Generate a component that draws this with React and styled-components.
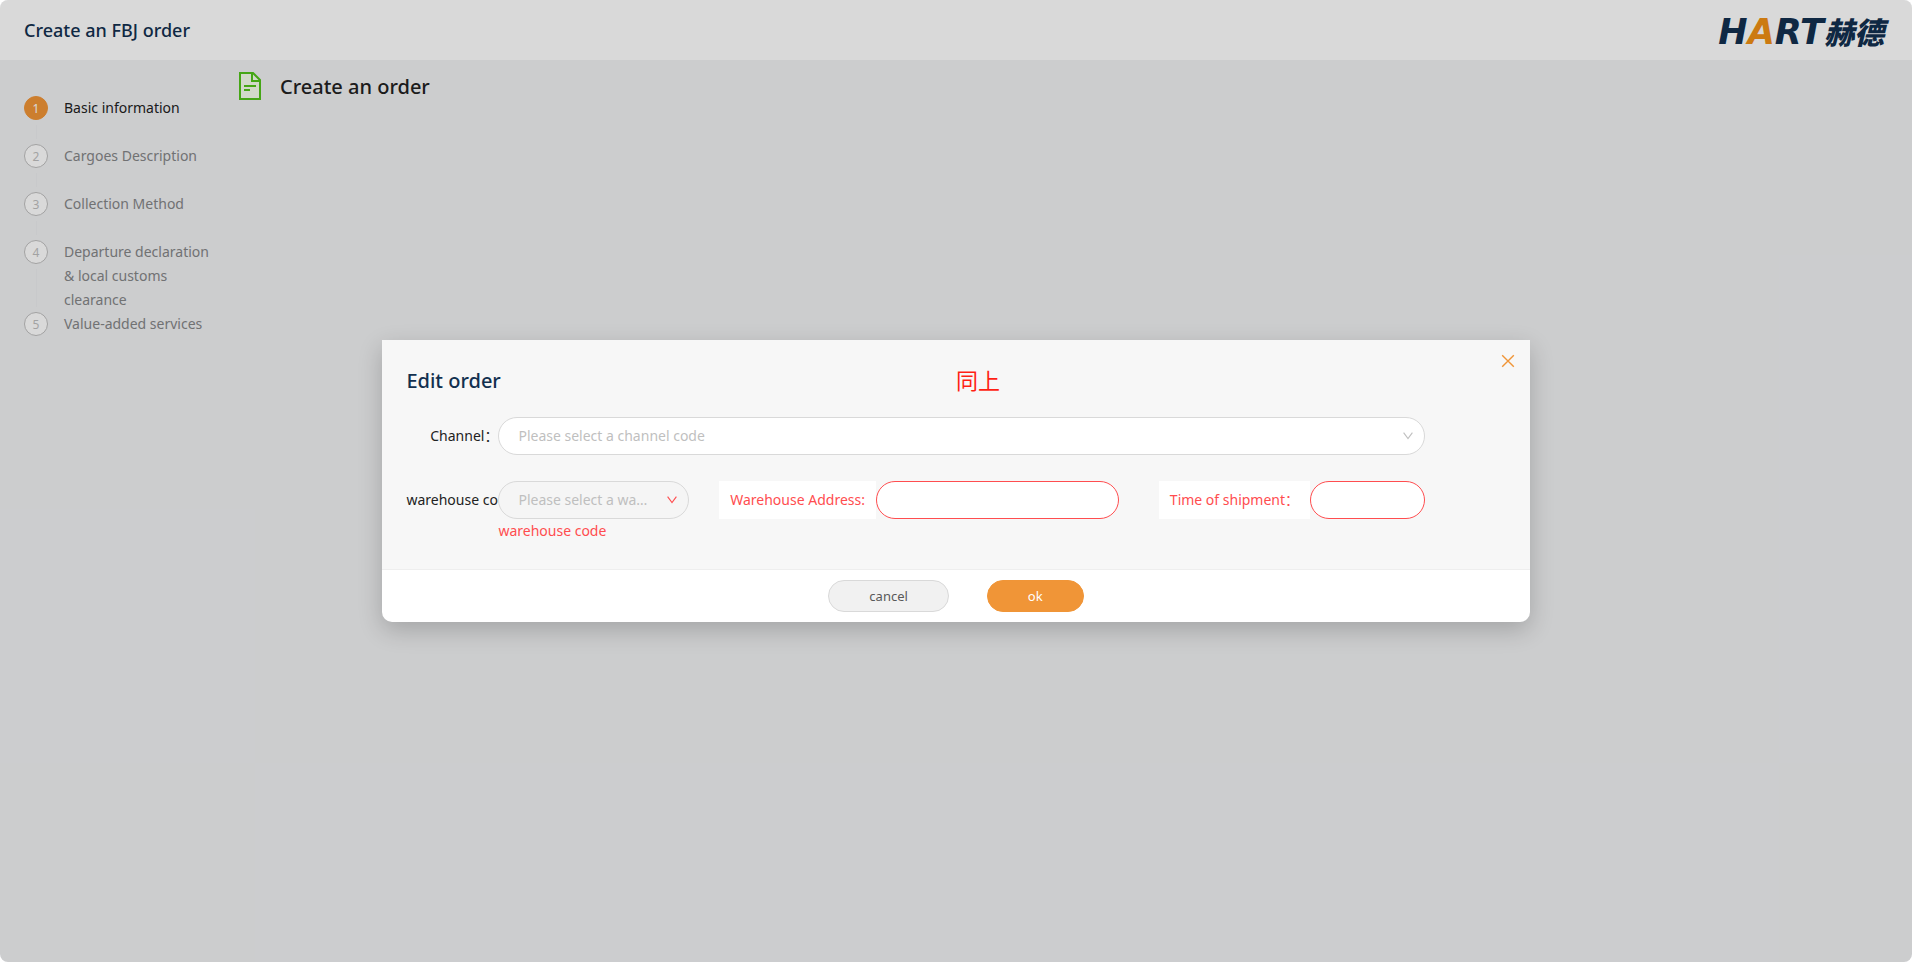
import styled, { createGlobalStyle } from 'styled-components'

const steps = [
  'Basic information',
  'Cargoes Description',
  'Collection Method',
  'Departure declaration & local customs clearance',
  'Value-added services',
]

function ArrowIcon() {
  return (
    <svg width="12" height="12" viewBox="0 0 12 12" fill="none" stroke="currentColor" strokeWidth="1.1">
      <path d="M1.6 2.6 6 8.6l4.4-6" />
    </svg>
  )
}

function CloseIcon() {
  return (
    <svg width="14" height="14" viewBox="0 0 14 14" fill="none" stroke="currentColor" strokeWidth="1.4">
      <path d="M1.2 1.2l11.6 11.6M12.8 1.2 1.2 12.8" />
    </svg>
  )
}

function FileIcon() {
  return (
    <svg width="22" height="28" viewBox="0 0 22 28" fill="none" stroke="#52c41a" strokeWidth="2">
      <path d="M1 1h13l7 7v19H1z" fill="#f6ffed" />
      <path d="M13 1v8h8" />
      <path d="M5 14h12M5 18h6" />
    </svg>
  )
}

function App() {
  return (
    <>
      <GlobalStyle />
      <Page>
        <Header>
          <PageTitle>Create an FBJ order</PageTitle>
          <Logo>
            <LogoLatin>H<i>A</i>RT</LogoLatin>
            <LogoHan>赫德</LogoHan>
          </Logo>
        </Header>
        <Content>
          <StepList>
            {steps.map((step, i) => (
              <Step key={step}>
                <StepMark>
                  <StepNumber $active={i === 0}>{i + 1}</StepNumber>
                </StepMark>
                <StepText $active={i === 0}>{step}</StepText>
              </Step>
            ))}
          </StepList>
          <Main>
            <FileIcon />
            <h2>Create an order</h2>
          </Main>
        </Content>

        <Mask>
          <Modal role="dialog" aria-labelledby="modal-title">
            <CloseBtn type="button" aria-label="close">
              <CloseIcon />
            </CloseBtn>
            <ModalBody>
              <ModalHead>
                <ModalTitle id="modal-title">Edit order</ModalTitle>
                <Remark>同上</Remark>
              </ModalHead>
              <Form>
                <ChannelRow>
                  <Label htmlFor="channel" $right>Channel：</Label>
                  <SelectBox>
                    <Select id="channel" defaultValue="">
                      <option value="">Please select a channel code</option>
                    </Select>
                    <ArrowIcon />
                  </SelectBox>
                </ChannelRow>
                <WarehouseRow>
                  <Label htmlFor="warehouse">warehouse code：</Label>
                  <div>
                    <SelectBox $error>
                      <Select id="warehouse" defaultValue="" disabled>
                        <option value="">Please select a warehouse code</option>
                      </Select>
                      <ArrowIcon />
                    </SelectBox>
                    <ErrorText>warehouse code</ErrorText>
                  </div>
                  <Field>
                    <FieldLabel htmlFor="address">Warehouse Address:</FieldLabel>
                    <Input id="address" type="text" />
                  </Field>
                  <Field>
                    <FieldLabel htmlFor="shipment">Time of shipment：</FieldLabel>
                    <Input id="shipment" type="text" />
                  </Field>
                </WarehouseRow>
              </Form>
            </ModalBody>
            <ModalFooter>
              <Button type="button">cancel</Button>
              <Button type="button" $primary>ok</Button>
            </ModalFooter>
          </Modal>
        </Mask>
      </Page>
    </>
  )
}

export default App

const GlobalStyle = createGlobalStyle`
  * {
    box-sizing: border-box;
  }

  body {
    margin: 0;
    background: #fff;
    color: #222;
    font-family: 'Noto Sans', 'Noto Sans CJK SC', sans-serif;
    font-size: 14px;
    line-height: 24px;
  }

  h1, h2, h3, p, ol {
    margin: 0;
    padding: 0;
  }

  button, input, select {
    font: inherit;
  }
`

const Page = styled.div`
  position: relative;
  min-height: 100vh;
  border-radius: 8px;
  overflow: hidden;
  background: #f0f1f3;
`

const Header = styled.header`
  display: flex;
  align-items: center;
  justify-content: space-between;
  height: 60px;
  padding: 0 24px;
  background: #fff;
`

const PageTitle = styled.h1`
  color: #12304f;
  font-size: 18px;
  font-weight: 500;
`

const Logo = styled.div`
  display: flex;
  align-items: baseline;
  padding: 2px 4px 0 0;
  color: #12304f;
  line-height: 32px;
`

const LogoLatin = styled.span`
  font-family: 'DejaVu Sans', sans-serif;
  font-size: 35px;
  font-weight: 700;
  font-style: italic;

  i {
    color: #f09015;
  }
`

const LogoHan = styled.span`
  font-family: 'Noto Sans CJK SC', sans-serif;
  font-size: 30px;
  font-weight: 900;
  font-style: italic;
`

const Content = styled.div`
  display: flex;
`

const StepList = styled.ol`
  flex: 0 0 239px;
  padding: 36px 24px;
  list-style: none;
`

const StepMark = styled.div`
  display: flex;
  flex-direction: column;
  align-items: center;
  gap: 5px;
  padding-bottom: 5px;

  &::after {
    content: '';
    flex: 1;
    width: 1px;
    background: #ecedef;
  }
`

const Step = styled.li`
  display: flex;
  gap: 16px;
  min-height: 48px;

  &:last-child ${StepMark}::after {
    display: none;
  }
`

const StepNumber = styled.span`
  width: 24px;
  height: 24px;
  border: 1px solid ${({ $active }) => ($active ? '#f09537' : '#bfbfbf')};
  border-radius: 50%;
  background: ${({ $active }) => ($active ? '#f09537' : '#fff')};
  color: ${({ $active }) => ($active ? '#fff' : '#bfbfbf')};
  font-size: 12px;
  text-align: center;
`

const StepText = styled.span`
  width: 150px;
  color: ${({ $active }) => ($active ? '#222' : '#858688')};
`

const Main = styled.main`
  display: flex;
  flex: 1;
  align-items: flex-start;
  gap: 19px;
  padding-top: 12px;

  h2 {
    color: #222;
    font-size: 20px;
    font-weight: 500;
    line-height: 30px;
  }
`

const Mask = styled.div`
  position: absolute;
  inset: 0;
  display: flex;
  align-items: center;
  justify-content: center;
  background: rgba(0, 0, 0, 0.15);
`

const Modal = styled.section`
  position: relative;
  width: 60%;
  border-radius: 0 0 10px 10px;
  background: #fff;
  box-shadow: 0 8px 24px rgba(0, 0, 0, 0.2);
`

const CloseBtn = styled.button`
  position: absolute;
  top: 10px;
  right: 11px;
  display: flex;
  align-items: center;
  justify-content: center;
  width: 22px;
  height: 22px;
  padding: 0;
  border: 0;
  background: none;
  color: #f09537;
`

const ModalBody = styled.div`
  padding: 25px 0 26px;
  background: #f7f7f7;
`

const ModalHead = styled.div`
  display: grid;
  grid-template-columns: 1fr 1fr;
  line-height: 32px;
`

const ModalTitle = styled.h3`
  padding-left: 24px;
  color: #12304f;
  font-size: 20px;
  font-weight: 500;
`

const Remark = styled.span`
  color: #ff1f14;
  font-size: 22px;
  line-height: 30px;
`

const Form = styled.form`
  display: grid;
  gap: 26px;
  padding: 20px 105px 0 24px;
`

const ChannelRow = styled.div`
  display: grid;
  grid-template-columns: 92px 1fr;
`

const WarehouseRow = styled.div`
  display: grid;
  grid-template-columns: 92px minmax(0, 191fr) 30px minmax(0, 400fr) 40px minmax(0, 266fr);
  align-items: start;

  > :nth-child(3) {
    grid-column: 4;
  }

  > :nth-child(4) {
    grid-column: 6;
  }
`

const Label = styled.label`
  overflow: hidden;
  line-height: 38px;
  text-align: ${({ $right }) => ($right ? 'right' : 'left')};
  white-space: nowrap;
`

const SelectBox = styled.div`
  position: relative;
  color: ${({ $error }) => ($error ? '#ff4d4f' : '#bfbfbf')};

  svg {
    position: absolute;
    top: 13px;
    right: 11px;
    pointer-events: none;
  }
`

const Select = styled.select`
  display: block;
  width: 100%;
  height: 38px;
  padding: 0 38px 0 19px;
  border: 1px solid #d9d9d9;
  border-radius: 19px;
  appearance: none;
  background: #fff;
  color: #bfbfbf;
  text-overflow: ellipsis;

  &:disabled {
    background: #f5f5f5;
    opacity: 1;
  }
`

const ErrorText = styled.p`
  color: #ff4d4f;
`

const Field = styled.div`
  display: flex;
`

const FieldLabel = styled.label`
  flex: none;
  padding: 0 11px;
  background: #fff;
  color: #ff4d4f;
  line-height: 38px;
`

const Input = styled.input`
  flex: 1;
  min-width: 0;
  height: 38px;
  padding: 0 20px;
  border: 1px solid #ff4d4f;
  border-radius: 19px;
  background: #fff;
`

const ModalFooter = styled.div`
  display: flex;
  justify-content: center;
  gap: 38px;
  padding: 10px;
  border-top: 1px solid #eee;
`

const Button = styled.button`
  height: 32px;
  padding: 0 40px;
  border: 1px solid ${({ $primary }) => ($primary ? '#f09537' : '#d9d9d9')};
  border-radius: 16px;
  background: ${({ $primary }) => ($primary ? '#f09537' : '#f1f1f1')};
  color: ${({ $primary }) => ($primary ? '#fff' : '#595959')};
  font-size: 13px;
`
